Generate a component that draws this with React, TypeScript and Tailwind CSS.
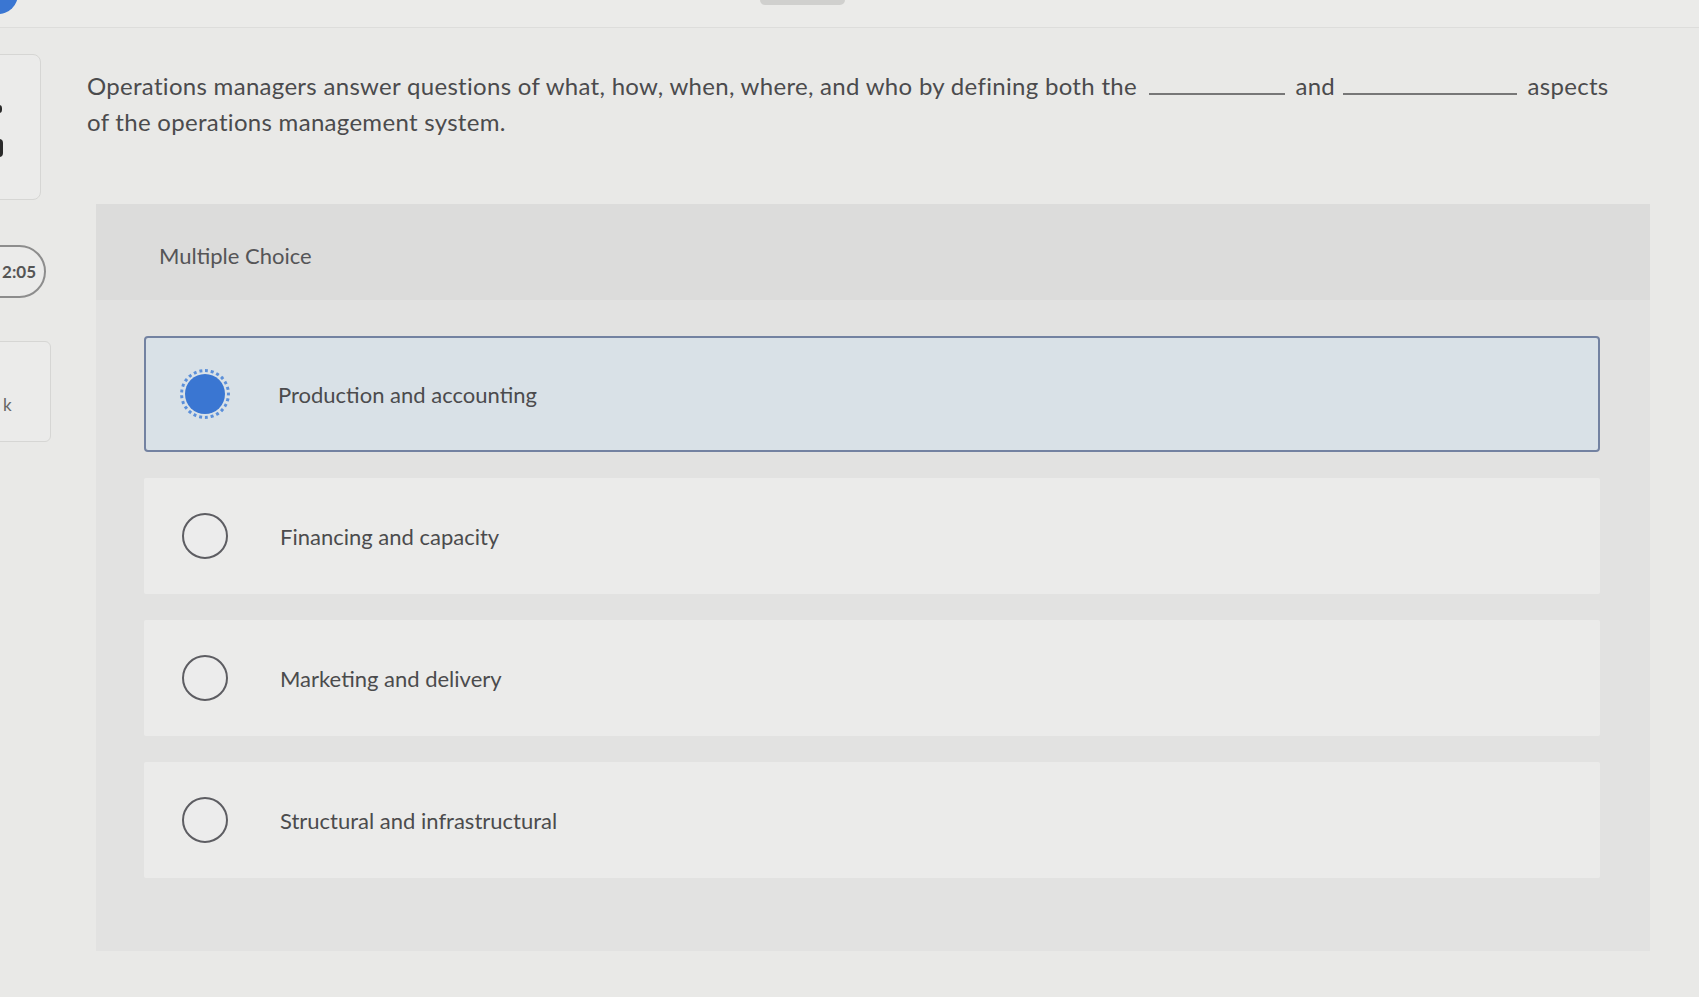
import React from "react";

const options = [
  "Production and accounting",
  "Financing and capacity",
  "Marketing and delivery",
  "Structural and infrastructural",
];

function Radio({ selected }: { selected: boolean }) {
  if (selected) {
    return (
      <div className="flex h-[50px] w-[50px] shrink-0 items-center justify-center rounded-full border-[3px] border-dotted border-[#5b8fd9]">
        <div className="h-[40px] w-[40px] rounded-full bg-[#3a76d2]" />
      </div>
    );
  }
  return <div className="h-[46px] w-[46px] shrink-0 rounded-full border-2 border-[#5d5d62] bg-[#ececec]" />;
}

export default function App() {
  return (
    <div
      className="relative flex h-[997px] w-[1699px] flex-col overflow-hidden bg-[#e9e9e7] text-[#4b4b4d]"
      style={{ fontFamily: "Lato, 'Open Sans', sans-serif" }}
    >
      {/* top strip */}
      <div className="relative flex h-[28px] shrink-0 border-b border-[#dddddb] bg-[#ebebe9]">
        <div className="absolute left-[-22px] top-[-26px] h-[40px] w-[40px] rounded-full bg-[#3a76d2]" />
        <div className="ml-[760px] h-[5px] w-[85px] rounded-b-md bg-[#d0d0ce]" />
      </div>

      <div className="flex flex-1">
        {/* sidebar */}
        <div className="flex w-[52px] shrink-0 flex-col">
          <div className="relative ml-[-12px] mt-[26px] h-[146px] w-[53px] rounded-lg border border-[#d6d6d4] bg-[#ebebea]">
            <div className="absolute left-[10px] top-[50px] h-[8px] w-[3px] rounded-r-full bg-[#2a2a2a]" />
            <div className="absolute left-[10px] top-[84px] h-[18px] w-[4px] rounded-r-full bg-[#2a2a2a]" />
          </div>
          <div className="ml-[-26px] mt-[45px] flex h-[53px] w-[72px] items-center justify-end rounded-full border-2 border-[#8d8d8d] bg-[#ebebea] pr-[8px]">
            <span className="text-[17px] font-bold text-[#555]">2:05</span>
          </div>
          <div className="ml-[-12px] mt-[43px] flex h-[101px] w-[63px] items-end rounded-md border border-[#d6d6d4] bg-[#ebebea] pb-[24px] pl-[14px]">
            <span className="text-[17px] text-[#666]">k</span>
          </div>
        </div>

        {/* main */}
        <div className="flex flex-1 flex-col">
          <p className="ml-[35px] mt-[40px] w-[1528px] text-[24px] leading-[36px] tracking-[0.3px] text-[#4b4b4d]">
            Operations managers answer questions of what, how, when, where, and who by defining both the
            <span className="ml-[12px] mr-[4px] inline-block w-[136px] border-b-2 border-[#777]" /> and
            <span className="ml-[8px] mr-[4px] inline-block w-[174px] border-b-2 border-[#777]" /> aspects of the
            operations management system.
          </p>

          <div className="ml-[44px] mt-[64px] flex w-[1554px] flex-col bg-[#e2e2e1]">
            <div className="flex h-[96px] items-center bg-[#dcdcdb] pl-[63px] pt-[6px]">
              <span className="text-[22px] text-[#555557]">Multiple Choice</span>
            </div>
            <div className="flex flex-col gap-[26px] pb-[73px] pl-[48px] pr-[50px] pt-[36px]">
              {options.map((o, i) => {
                const sel = i === 0;
                return (
                  <div
                    key={o}
                    className={
                      sel
                        ? "flex h-[116px] items-center gap-[48px] rounded-[4px] border-2 border-[#7382a1] bg-[#d9e1e7] pl-[34px]"
                        : "flex h-[116px] items-center gap-[52px] rounded-[2px] bg-[#ebebea] pl-[38px]"
                    }
                  >
                    <Radio selected={sel} />
                    <span className="text-[22px] text-[#4b4b4d]">{o}</span>
                  </div>
                );
              })}
            </div>
          </div>
        </div>
      </div>
    </div>
  );
}
